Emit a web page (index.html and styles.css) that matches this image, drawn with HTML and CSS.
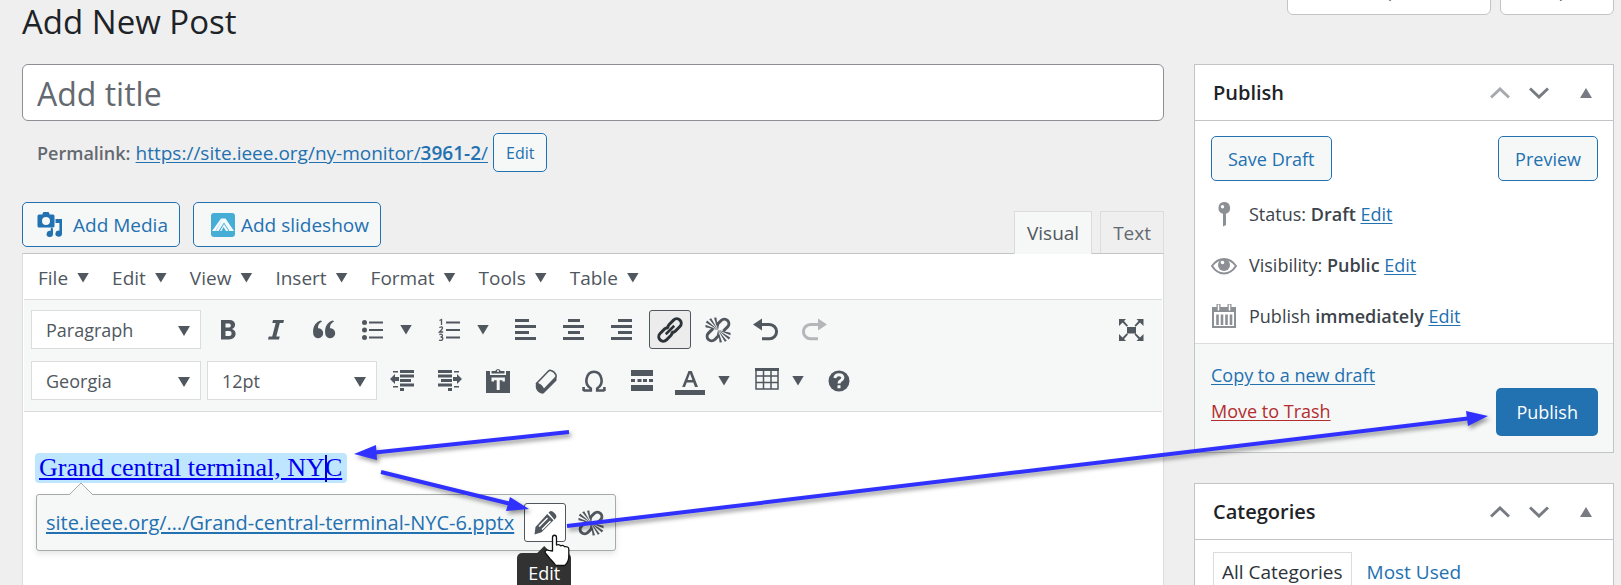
FILE: index.html
```html
<!DOCTYPE html>
<html lang="en">
<head>
<meta charset="utf-8">
<title>Add New Post</title>
<meta name="viewport" content="width=device-width, initial-scale=1">
<link rel="stylesheet" href="styles.css">
</head>
<body>
<svg class="sprite" width="0" height="0" aria-hidden="true">
  <symbol id="unlink" viewBox="0 0 26 26">
    <g transform="rotate(-45 13 13)" fill="none" stroke="currentColor" stroke-width="3">
      <path d="M10 17.500H4a4.500 4.500 0 0 1 0-9h6.500"/>
      <path d="M15.500 8.500H22a4.500 4.500 0 0 1 0 9h-6"/>
    </g>
    <path fill="currentColor" d="M13 13L.5 10.200v-2.400zM13 13L.8 5.500l1.400-2zM13 13L4.200 2.200l2-1zM13 13L9 .800l2.400-.4zM13 13l-.6-6 2-1zM13 13l12.500 2.800v2.400zM13 13l12.200 7.500-1.400 2zM13 13l8.800 10.800-2 1zM13 13l4 12.200-2.400.4zM13 13l.6 6-2 1z"/>
  </symbol>
  <symbol id="up" viewBox="0 0 20 12"><path d="M1 10.500L10 2l9 8.500" fill="none" stroke="currentColor" stroke-width="3"/></symbol>
  <symbol id="down" viewBox="0 0 20 12"><path d="M1 1.500L10 10l9-8.500" fill="none" stroke="currentColor" stroke-width="3"/></symbol>
  <symbol id="toggle" viewBox="0 0 12 10"><path d="M0 10L6 0l6 10z" fill="currentColor"/></symbol>
</svg>

<header class="screen-meta">
  <button type="button" class="meta-tab meta-wide">Screen Options ▾</button>
  <button type="button" class="meta-tab">Help ▾</button>
</header>

<div class="page">
  <h1>Add New Post</h1>
  <div class="columns">
    <main class="main">
      <input class="title" type="text" placeholder="Add title" aria-label="Add title">
      <div class="permalink">
        <strong>Permalink:</strong>
        <a href="#">https://site.ieee.org/ny-monitor/<b>3961-2</b>/</a>
        <button type="button" class="btn btn-small">Edit</button>
      </div>

      <div class="editor-tools">
        <button type="button" class="btn media">
          <svg width="26" height="26" viewBox="0 0 26 26" fill="currentColor" aria-hidden="true"><path fill-rule="evenodd" d="M5.500 1.500L6.500 0h5l1 1.500v1H16q1.500 0 1.500 1.500v10q0 1.500-1.500 1.500H2Q.5 15.500.5 14V4Q.5 2.500 2 2.500h3.500zM9 5a4 4 0 1 0 0 8a4 4 0 1 0 0-8z"/><path d="M18.500 7H25v14.500a3.300 3 0 1 1-2.600-2.800V11h-3.900zM14 15.500l2 1V22a3.200 3 0 1 1-2.500-3z"/></svg>
          Add Media
        </button>
        <button type="button" class="btn slides">
          <svg width="24" height="24" viewBox="0 0 24 24" aria-hidden="true"><rect width="24" height="24" rx="3" fill="#46add6"/><path d="M1 18L10 5.500h2L4.500 18zM12 5.500h2.500L23 18h-4.500L13 9.500 7.500 18H5zM13 11l4.500 7H15l-2.500-4-2 4H9z" fill="#f3fbff"/></svg>
          Add slideshow
        </button>
        <div class="tabs">
          <button type="button" class="tab active">Visual</button>
          <button type="button" class="tab">Text</button>
        </div>
      </div>

      <section class="editor">
        <nav class="menubar">
          <button type="button">File<i class="caret"></i></button>
          <button type="button">Edit<i class="caret"></i></button>
          <button type="button">View<i class="caret"></i></button>
          <button type="button">Insert<i class="caret"></i></button>
          <button type="button">Format<i class="caret"></i></button>
          <button type="button">Tools<i class="caret"></i></button>
          <button type="button">Table<i class="caret"></i></button>
        </nav>
        <div class="toolbar">
          <div class="row">
            <div class="pick"><select aria-label="Block format"><option>Paragraph</option></select></div>
            <button type="button" class="tool" aria-label="Bold"><svg width="26" height="26" viewBox="0 0 26 26"><path fill="currentColor" fill-rule="evenodd" d="M6 3h8.500c7 0 7 7.500 2.500 9 5.500 1.500 5 10.500-3 10.500H6zM10.500 6.500v4H14c2.500 0 2.500-4 0-4zM10.500 14v5h4c2.800 0 2.800-5 0-5z"/></svg></button>
            <button type="button" class="tool" aria-label="Italic"><svg width="26" height="26" viewBox="0 0 26 26"><path fill="currentColor" d="M10 3h11l-.7 3h-3.500l-3.500 13.500h3.400l-.7 3H5l.7-3h3.500L12.700 6H9.300z"/></svg></button>
            <button type="button" class="tool" aria-label="Blockquote"><svg width="26" height="26" viewBox="0 0 26 26"><path fill="currentColor" d="M11 4.500Q6.700 6.500 7 11.200a5 5 0 1 1-4.800 5.300C1.500 9 5 4.700 10 3.500zM23 4.500q-4.300 2-4 6.700a5 5 0 1 1-4.800 5.300C13.500 9 17 4.700 22 3.500z"/></svg></button>
            <div class="split">
              <button type="button" class="tool" aria-label="Bulleted list"><svg width="26" height="26" viewBox="0 0 26 26" fill="currentColor"><circle cx="5.500" cy="5.500" r="2.500"/><circle cx="5.500" cy="13" r="2.500"/><circle cx="5.500" cy="20.500" r="2.500"/><path d="M10 4.500h14v2H10zM10 12h14v2H10zM10 19.500h14v2H10z"/></svg></button>
              <button type="button" class="more" aria-label="List styles"><i class="caret"></i></button>
            </div>
            <div class="split">
              <button type="button" class="tool" aria-label="Numbered list"><svg width="26" height="26" viewBox="0 0 26 26" fill="currentColor"><path d="M10 4.500h14v2H10zM10 12h14v2H10zM10 19.500h14v2H10z"/><path fill="none" stroke="currentColor" stroke-width="1.300" d="M3.500 3.500L5.500 2.500V8M3.300 10.500Q6.500 9 6.500 11q0 1-3 4h3.700M3.300 17.500Q6.500 16.600 6.500 18.500q0 1.400-2 1.500 2.300 0 2.300 1.700 0 2.300-3.700 1.500"/></svg></button>
              <button type="button" class="more" aria-label="Number styles"><i class="caret"></i></button>
            </div>
            <button type="button" class="tool" aria-label="Align left"><svg width="26" height="26" viewBox="0 0 26 26"><path fill="currentColor" d="M2 2h14v3H2zM2 8h21v3H2zM2 14h14v3H2zM2 20h21v3H2z"/></svg></button>
            <button type="button" class="tool" aria-label="Align center"><svg width="26" height="26" viewBox="0 0 26 26"><path fill="currentColor" d="M7 2h12v3H7zM2 8h21v3H2zM7 14h12v3H7zM2 20h21v3H2z"/></svg></button>
            <button type="button" class="tool" aria-label="Align right"><svg width="26" height="26" viewBox="0 0 26 26"><path fill="currentColor" d="M9 2h14v3H9zM2 8h21v3H2zM9 14h14v3H9zM2 20h21v3H2z"/></svg></button>
            <button type="button" class="tool pressed" aria-label="Insert link"><svg width="26" height="26" viewBox="0 0 26 26"><g transform="rotate(-45 13 13)" fill="none" stroke="currentColor" stroke-width="3"><path d="M13.500 15.500a4.300 4.300 0 0 1-3.500 2H3.500a4.500 4.500 0 0 1 0-9H10a4.300 4.300 0 0 1 3.500 2"/><path d="M12.500 10.500a4.300 4.300 0 0 1 3.500-2h6.500a4.500 4.500 0 0 1 0 9H16a4.300 4.300 0 0 1-3.500-2"/><path d="M7 13h12" stroke-width="2.500"/></g></svg></button>
            <button type="button" class="tool" aria-label="Remove link"><svg width="26" height="26"><use href="#unlink"/></svg></button>
            <button type="button" class="tool" aria-label="Undo"><svg width="26" height="26" viewBox="0 0 26 26"><path fill="currentColor" d="M0 7.500L9 1.500v12z"/><path fill="none" stroke="currentColor" stroke-width="3" d="M7 7.500h9.500a7 7 0 0 1 0 14.200H9"/></svg></button>
            <button type="button" class="tool faded" aria-label="Redo"><svg width="26" height="26" viewBox="0 0 26 26"><path fill="currentColor" d="M26 7.500l-9-6v12z"/><path fill="none" stroke="currentColor" stroke-width="3" d="M19 7.500H9.500a7 7 0 0 0 0 14.200H17"/></svg></button>
            <button type="button" class="tool full" aria-label="Distraction-free writing"><svg width="26" height="26" viewBox="0 0 26 26"><path fill="currentColor" d="M9 10h9v6.500H9zM1 2h7L6 4l4 4.500-1.200 1.200L4.500 5.500 1 9zM25.500 2h-7l2 2-4 4.500 1.200 1.200 4.300-4.200 3.500 3.500zM1 24h7l-2-2 4-4.500-1.200-1.200-4.300 4.200L1 17zM25.500 24h-7l2-2-4-4.500 1.200-1.200 4.300 4.200 3.500-3.500z"/></svg></button>
          </div>
          <div class="row">
            <div class="pick"><select aria-label="Font family"><option>Georgia</option></select></div>
            <div class="pick pick-gap"><select aria-label="Font size"><option>12pt</option></select></div>
            <button type="button" class="tool" aria-label="Decrease indent"><svg width="26" height="26" viewBox="0 0 26 26"><path fill="currentColor" d="M11 2h14v3H11zM11 6.500h14v3H11zM11 11h11v3H11zM11 15.500h14v3H11zM11 20h4v3h-4zM4 3h5v1.500H4zM4 18h5v1.500H4zM1 11l5-5v3h4v4H6v3z"/></svg></button>
            <button type="button" class="tool" aria-label="Increase indent"><svg width="26" height="26" viewBox="0 0 26 26"><path fill="currentColor" d="M1 2h14v3H1zM1 6.500h14v3H1zM4 11h11v3H4zM1 15.500h14v3H1zM11 20h4v3h-4zM17 3h5v1.500h-5zM17 18h5v1.500h-5zM25 11l-5-5v3h-4v4h4v3z"/></svg></button>
            <button type="button" class="tool" aria-label="Paste as text"><svg width="26" height="26" viewBox="0 0 26 26"><path fill="currentColor" fill-rule="evenodd" d="M1 3h4v4h16V3h4v22H1zM6.500 9.500v4H9v-1.300h2.700V22h3V12.200h2.700v1.300h2.500v-4zM6.500 5.500V3h3.700Q13-1 15.800 3h3.700v2.500z"/><circle cx="13" cy="3" r="1" fill="#f6f7f7"/></svg></button>
            <button type="button" class="tool" aria-label="Clear formatting"><svg width="26" height="26" viewBox="0 0 26 26"><path fill="none" stroke="currentColor" stroke-width="1.600" stroke-linejoin="round" d="M3.500 15.500L15.500 3q1-1 2.500-.5 3.500 1 5 4.500.500 1.500-.5 2.500L10.500 22q-1.500-5-7-6.500z"/><path fill="currentColor" d="M3 14.500q6.500 1.500 8 7L23.500 8.500v4L11 25q-1 1-2.500.5-4-1-5.500-5-.5-3 0-6z"/></svg></button>
            <button type="button" class="tool" aria-label="Special character"><svg width="26" height="26" viewBox="0 0 26 26"><path fill="none" stroke="currentColor" stroke-width="2.600" d="M2.500 22.500h7.300v-2Q4.500 17 5.500 11 7 3.800 13 3.800t7.500 7.200q1 6-4.300 9.500v2h7.300M2.600 19v4M23.400 19v4"/></svg></button>
            <button type="button" class="tool" aria-label="Read more tag"><svg width="26" height="26" viewBox="0 0 26 26"><path fill="currentColor" d="M2 2h22v6H2zM2 11h4v3H2zM8.500 11h4v3h-4zM14 11h4v3h-4zM20 11h4v3h-4zM2 17h22v6H2z"/></svg></button>
            <div class="split">
              <button type="button" class="tool" aria-label="Text color"><svg width="30" height="30" viewBox="0 0 30 30"><path fill="currentColor" fill-rule="evenodd" d="M13.500 5h3.300L23 21h-3l-1.700-4.600h-6.600L10 21H7.200zM12.600 14h4.800L15 7.600zM0 24h30v5H0z"/></svg></button>
              <button type="button" class="more" aria-label="Text colors"><i class="caret"></i></button>
            </div>
            <div class="split narrow">
              <button type="button" class="tool" aria-label="Table"><svg width="26" height="32" viewBox="0 0 26 32"><path fill="none" stroke="currentColor" stroke-width="1.500" d="M2 4h22v20H2zM2 11h22M2 17.500h22M9.500 5v19M17 5v19"/><path d="M1 3h24v3H1z" fill="currentColor"/></svg></button>
              <button type="button" class="more" aria-label="Table options"><i class="caret"></i></button>
            </div>
            <button type="button" class="tool" aria-label="Keyboard shortcuts"><svg width="26" height="26" viewBox="0 0 26 26"><circle cx="13" cy="13" r="10.500" fill="currentColor"/><path fill="none" stroke="#f6f7f7" stroke-width="3" d="M8.800 10Q9.500 6.800 13 6.800t3.900 3q0 1.700-2.400 3Q13 13.500 13 15.500M13 17.300v3"/></svg></button>
          </div>
        </div>
        <div class="content">
          <a class="doc-link" href="#">Grand central terminal, NY<span class="cursor"></span>C</a>
          <div class="link-bar">
            <svg class="notch" width="26" height="13" viewBox="0 0 26 13"><path d="M1 13L13 1l12 12" fill="#f6f7f7" stroke="#a7aaad"/></svg>
            <a href="#">site.ieee.org/…/Grand-central-terminal-NYC-6.pptx</a>
            <button type="button" class="tool hovered" aria-label="Edit link"><svg width="26" height="26" viewBox="0 0 26 26"><path fill="currentColor" fill-rule="evenodd" d="M16.500 2.500l2-1.500q1.500-.5 4 2t2 4l-2 2.700zM15.200 4l6.300 6.300L9.500 22.200 2.500 24.500l1-7.500zM15 7.500L6.500 16l1 1L16 8.500zM18 10.500L9.500 19l1 1 8.500-8.500z"/></svg></button>
            <button type="button" class="tool" aria-label="Remove link"><svg width="26" height="26"><use href="#unlink"/></svg></button>
            <span class="tip" role="tooltip">Edit</span>
          </div>
        </div>
      </section>
    </main>

    <aside class="side">
      <section class="box">
        <div class="box-head">
          <h2>Publish</h2>
          <button type="button" class="dim" aria-label="Move up"><svg width="20" height="12"><use href="#up"/></svg></button>
          <button type="button" aria-label="Move down"><svg width="20" height="12"><use href="#down"/></svg></button>
          <button type="button" class="fold" aria-label="Toggle panel"><svg width="12" height="10"><use href="#toggle"/></svg></button>
        </div>
        <div class="publish-body">
          <div class="between">
            <button type="button" class="btn">Save Draft</button>
            <button type="button" class="btn">Preview</button>
          </div>
          <ul class="status">
            <li><svg width="26" height="26" viewBox="0 0 26 26"><path fill="#8c8f94" fill-rule="evenodd" d="M13 1a6 6 0 0 1 2 11.700V24l-3 1.500V12.800A6 6 0 0 1 13 1zm-1.500 3a1.700 1.700 0 1 0 0 3.400 1.700 1.700 0 0 0 0-3.400z"/></svg><span>Status: <b>Draft</b> <a href="#">Edit</a></span></li>
            <li><svg width="26" height="26" viewBox="0 0 26 26"><path fill="#fff" stroke="#8c8f94" stroke-width="2" d="M1 14Q6 7 13 7t12 7q-5 7.500-12 7.500T1 14z"/><circle cx="13" cy="13" r="6" fill="#8c8f94"/><circle cx="11.500" cy="10.500" r="1.800" fill="#fff"/></svg><span>Visibility: <b>Public</b> <a href="#">Edit</a></span></li>
            <li><svg width="26" height="26" viewBox="0 0 26 26"><path fill="#8c8f94" fill-rule="evenodd" d="M1 4h24v21H1zM3 9v14h20V9z"/><path fill="none" stroke="#8c8f94" stroke-width="4" d="M7.500 1v6M18.500 1v6"/><path stroke="#fff" stroke-width="1.500" d="M7.500 1.500v6M18.500 1.500v6"/><path stroke="#8c8f94" stroke-width="2.600" d="M6.500 11.500V22M11 11.500V22M15.500 11.500V22M20 11.500V22"/></svg><span>Publish <b>immediately</b> <a href="#">Edit</a></span></li>
          </ul>
        </div>
        <div class="actions">
          <div class="action-links"><a href="#">Copy to a new draft</a><a class="trash" href="#">Move to Trash</a></div>
          <button type="button" class="primary">Publish</button>
        </div>
      </section>
      <section class="box box-last">
        <div class="box-head">
          <h2>Categories</h2>
          <button type="button" aria-label="Move up"><svg width="20" height="12"><use href="#up"/></svg></button>
          <button type="button" aria-label="Move down"><svg width="20" height="12"><use href="#down"/></svg></button>
          <button type="button" class="fold" aria-label="Toggle panel"><svg width="12" height="10"><use href="#toggle"/></svg></button>
        </div>
        <div class="cats"><a class="on" href="#">All Categories</a><a href="#">Most Used</a></div>
      </section>
    </aside>
  </div>
</div>

<svg class="marks" width="1621" height="585" viewBox="0 0 1621 585" aria-hidden="true">
  <g fill="#3030ff" stroke="#3030ff">
    <path stroke-width="4" d="M569 432L370 453M381 472l130 32M567 526l905-108"/>
    <path stroke="none" d="M354 454l22-9 1 15zM529 509l-23 2 4-14zM1488 416l-22-5 2 15z"/>
  </g>
  <path fill="#fff" stroke="#111" stroke-width="1.300" stroke-linejoin="round" d="M552.500 551v-13.500c0-3 4-3 4 0v7.500q3-1.200 4 .8 3-1 4 .9 4-.5 4.300 2.300v7q0 6-4 9.500h-9q-2-3-6-7l-4.500-5.500c-1-2 1.500-3.600 3.500-2.600z"/>
</svg>
</body>
</html>
```
FILE: styles.css
```css
* { box-sizing: border-box; }
body {
  position: relative;
  display: flex;
  flex-direction: column;
  margin: 0;
  min-height: 100vh;
  background: #efefef;
  color: #3c434a;
  font-family: "Open Sans", "Noto Sans", sans-serif;
  font-size: 18px;
  line-height: 26px;
}
button, input, select { font: inherit; color: inherit; }
button { padding: 0; border: 0; background: none; }
a { color: #2271b1; text-underline-offset: 2px; }
h1, h2, ul { margin: 0; padding: 0; font-weight: 400; }
svg { display: block; flex: none; }
b, strong { font-weight: 600; }
.sprite { position: absolute; }

.screen-meta {
  display: flex;
  flex: none;
  justify-content: flex-end;
  align-items: flex-end;
  gap: 9px;
  height: 15px;
  padding-right: 7px;
  overflow: hidden;
}
.meta-tab {
  flex: none;
  width: 114px;
  height: 42px;
  padding-bottom: 8px;
  border: 1px solid #c3c4c7;
  border-radius: 0 0 6px 6px;
  background: #fff;
  color: #646970;
}
.meta-wide { width: 204px; padding-right: 12px; }

.page {
  display: flex;
  flex: 1;
  flex-direction: column;
  margin-top: -14px;
  padding: 0 7px 0 22px;
}
h1 { color: #1d2327; font-size: 33px; line-height: 42px; }
.columns { display: flex; flex: 1; gap: 30px; margin-top: 21px; }
.main { display: flex; flex: 1; flex-direction: column; min-width: 0; }
.side { display: flex; flex: none; flex-direction: column; width: 420px; }

.title {
  display: block;
  width: 100%;
  height: 57px;
  padding: 2px 14px 0;
  border: 1px solid #8c8f94;
  border-radius: 6px;
  background: #fff;
  font-size: 32px;
}
.title::placeholder { color: #646970; opacity: 1; }
.permalink {
  display: flex;
  align-items: center;
  gap: 5px;
  margin-top: 12px;
  padding-left: 15px;
  color: #646970;
}
.permalink a { font-size: 19px; }
.btn {
  display: flex;
  align-items: center;
  height: 45px;
  padding: 0 16px;
  border: 1px solid #2271b1;
  border-radius: 5px;
  background: #f6f7f7;
  color: #2271b1;
  white-space: nowrap;
}
.btn-small { height: 39px; padding: 0 12px; font-size: 16px; }

.editor-tools { display: flex; align-items: flex-end; margin-top: 30px; font-size: 19px; }
.editor-tools .btn { margin-bottom: 6px; }
.media { gap: 10px; padding: 0 11px 0 14px; }
.slides { gap: 6px; margin-left: 13px; padding: 0 11px 0 17px; }
.tabs { display: flex; gap: 8px; margin-left: auto; }
.tab {
  height: 42px;
  padding: 0 12px;
  border: 1px solid #dcdcde;
  border-bottom: 0;
  color: #646970;
}
.tab.active { position: relative; margin-bottom: -1px; height: 43px; background: #f6f7f7; color: #50575e; }

.editor {
  flex: 1;
  border: 1px solid #dcdcde;
  border-top-color: #c3c4c7;
  border-bottom: 0;
  background: #fff;
}
.menubar { display: flex; gap: 23px; height: 45px; padding: 2px 0 0 15px; color: #50575e; font-size: 19px; }
.menubar button { display: flex; align-items: center; gap: 9px; }
.caret {
  width: 12px;
  height: 10px;
  background: #50575e;
  clip-path: polygon(0 0, 100% 0, 50% 100%);
}
.toolbar {
  display: flex;
  flex-direction: column;
  gap: 12px;
  margin: 0 1px;
  padding: 10px 7px 11px;
  border: solid #dcdcde;
  border-width: 1px 0;
  background: #f6f7f7;
  color: #50575e;
}
.row { display: flex; align-items: center; height: 39px; }
.pick { position: relative; width: 170px; height: 39px; margin-right: 3px; }
.pick-gap { margin: 0 1px 0 3px; }
.pick select {
  width: 100%;
  height: 100%;
  padding: 0 14px;
  border: 1px solid #dcdcde;
  border-radius: 0;
  background: #fff;
  appearance: none;
}
.pick::after {
  content: "";
  position: absolute;
  right: 11px;
  top: 16px;
  width: 12px;
  height: 10px;
  background: #50575e;
  clip-path: polygon(0 0, 100% 0, 50% 100%);
  pointer-events: none;
}
.tool {
  display: flex;
  flex: none;
  align-items: center;
  justify-content: center;
  width: 42px;
  height: 39px;
  margin: 0 3px;
  border: 1px solid transparent;
  border-radius: 3px;
}
.pressed { border-color: #50575e; background: #ececed; color: #2c3338; }
.faded { color: #b4b7ba; }
.full { margin-left: auto; }
.split { display: flex; flex: none; width: 77px; }
.more { display: flex; align-items: center; justify-content: center; width: 20px; }
.narrow { width: 72px; }
.narrow .tool { margin-right: 0; }

.content { position: relative; padding: 41px 12px 0; }
.doc-link {
  display: inline-block;
  padding: 0 5px 0 4px;
  border-radius: 4px;
  background: #bfe6ff;
  color: #0000ee;
  font-family: "Liberation Serif", serif;
  font-size: 26px;
  line-height: 30px;
}
.cursor { display: inline-block; width: 2px; height: 27px; margin-right: -2px; background: #00c; vertical-align: -6px; }
.link-bar {
  position: absolute;
  top: 82px;
  left: 13px;
  display: flex;
  align-items: center;
  height: 57px;
  padding: 0 1px 0 9px;
  border: 1px solid #a7aaad;
  border-radius: 3px;
  background: #f6f7f7;
  box-shadow: 0 3px 6px rgba(0, 0, 0, .1);
  color: #50575e;
}
.link-bar a { margin-right: 8px; font-size: 20px; text-decoration-thickness: 2px; }
.link-bar .tool { margin: 0 2px; }
.notch { position: absolute; left: 31px; top: -13px; }
.link-bar .hovered { border-color: #50575e; background: #fff; }
.tip {
  position: absolute;
  right: 44px;
  top: 58px;
  width: 54px;
  height: 33px;
  padding-top: 7px;
  border-radius: 5px 5px 0 0;
  background: #323232;
  color: #fff;
  font-size: 18px;
  text-align: center;
}
.tip::before {
  content: "";
  position: absolute;
  left: 20px;
  top: -7px;
  width: 14px;
  height: 7px;
  background: #323232;
  clip-path: polygon(50% 0, 100% 100%, 0 100%);
}

.box { margin-bottom: 30px; border: 1px solid #c3c4c7; background: #fff; }
.box-last { flex: 1; margin-bottom: 0; border-bottom: 0; }
.box-head {
  display: flex;
  align-items: center;
  gap: 19px;
  height: 56px;
  padding: 1px 21px 0 18px;
  border-bottom: 1px solid #c3c4c7;
  color: #787c82;
}
.box-head h2 { flex: 1; color: #1d2327; font-size: 20px; font-weight: 600; }
.dim { opacity: .65; }
.fold { margin-left: 12px; }
.publish-body { padding: 15px 15px 14px 16px; }
.between { display: flex; justify-content: space-between; }
.status { margin-top: 20px; list-style: none; display: grid; gap: 25px; }
.status li { display: flex; align-items: center; gap: 12px; }
.actions {
  display: flex;
  justify-content: space-between;
  padding: 18px 15px 16px 16px;
  border-top: 1px solid #dcdcde;
  background: #f6f7f7;
}
.action-links { display: grid; gap: 10px; align-content: start; }
.trash { color: #b32d2e; }
.primary {
  align-self: flex-end;
  height: 48px;
  margin-top: 26px;
  padding: 0 20px;
  border-radius: 5px;
  background: #2271b1;
  color: #fff;
}
.cats { display: flex; padding: 12px 19px 0 18px; gap: 6px; font-size: 19px; }
.cats a { height: 34px; padding: 7px 9px 0; text-decoration: none; }
.cats .on { padding: 6px 8px 0; border: 1px solid #dcdcde; border-bottom: 0; color: #2c3338; }

.marks {
  position: absolute;
  left: 0;
  top: 0;
  pointer-events: none;
}
.marks g { filter: drop-shadow(2px 3px 2px rgba(0, 0, 0, .4)); }
```
